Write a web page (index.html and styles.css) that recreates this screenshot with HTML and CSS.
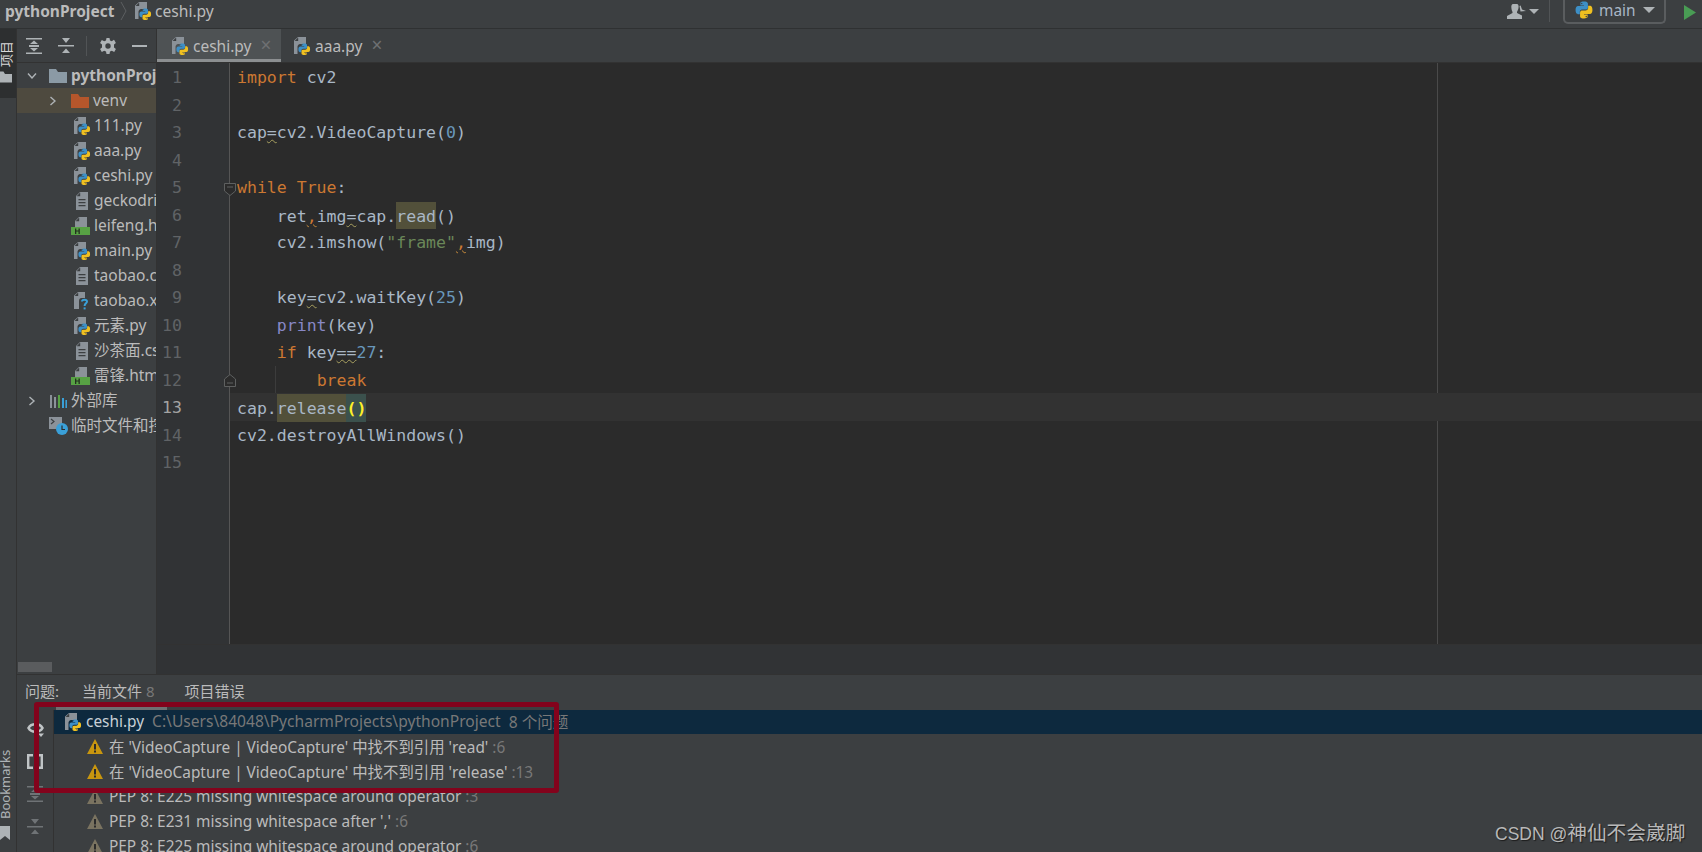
FILE: index.html
```html
<!DOCTYPE html>
<html lang="zh">
<head>
<meta charset="utf-8">
<title>pythonProject - ceshi.py</title>
<link rel="stylesheet" href="styles.css">
</head>
<body>
<svg class="defs" width="0" height="0">
  <defs>
    <symbol id="logo" viewBox="0 0 16 16">
      <path fill="#3d8fc6" d="M7.9 0.5C4.6 0.5 4.8 1.9 4.8 1.9V3.9H8V4.5H3.2S0.5 4.2 0.5 8.1C0.5 12 2.8 11.8 2.8 11.8H4.3V9.9S4.2 7.5 6.6 7.5H9.6S11.5 7.6 11.5 5.7V2.5S11.8 0.5 7.9 0.5ZM6 1.6A.6.6 0 1 1 6 2.8A.6.6 0 0 1 6 1.6Z"/>
      <path fill="#f0c020" d="M8.1 15.5C11.4 15.5 11.2 14.1 11.2 14.1V12.1H8V11.5H12.8S15.5 11.8 15.5 7.9C15.5 4 13.2 4.2 13.2 4.2H11.7V6.1S11.8 8.5 9.4 8.5H6.4S4.5 8.4 4.5 10.3V13.5S4.2 15.5 8.1 15.5ZM10 14.4A.6.6 0 1 1 10 13.2A.6.6 0 0 1 10 14.4Z"/>
    </symbol>
    <symbol id="page" viewBox="0 0 18 18">
      <path fill="#8b9299" d="M1 3.5L5 0H13V7H7.5C5 7 4.5 9 4.5 10V17H1Z"/>
      <path fill="#3c3f41" d="M5.2 0.6V4H1.6Z"/>
    </symbol>
    <symbol id="py" viewBox="0 0 18 18">
      <use href="#page" width="18" height="18"/>
      <use href="#logo" x="5" y="6" width="12.5" height="12.5"/>
    </symbol>
    <symbol id="txt" viewBox="0 0 18 18">
      <path fill="#8b9299" d="M3 4L7 0H15V18H3Z"/>
      <path fill="#3c3f41" d="M7.2 .6V4.2H3.6Z"/>
      <path fill="#3c3f41" d="M5.5 7H12.5V8.2H5.5ZM5.5 10H12.5V11.2H5.5ZM5.5 13H12.5V14.2H5.5Z"/>
    </symbol>
    <symbol id="html" viewBox="0 0 20 18">
      <path fill="#8b9299" d="M4 4L8 0H16V10H4Z"/>
      <path fill="#3c3f41" d="M8.2 .6V4.2H4.6Z"/>
      <rect y="10" width="19" height="8" fill="#57a244"/>
      <path fill="#23301f" d="M4 11.5H5.3V13.4H7.5V11.5H8.8V17H7.5V14.6H5.3V17H4Z"/>
    </symbol>
    <symbol id="unknown" viewBox="0 0 18 18">
      <path fill="#8b9299" d="M1 3.5L5 0H12V6H8.5C7 6 6 7 6 9V17H1Z"/>
      <path fill="#3c3f41" d="M5.2 .6V4H1.6Z"/>
      <path fill="none" stroke="#3aa0d8" stroke-width="2" d="M9 9.5C9 7 14 7 14 9.6C14 11.4 11.6 11.4 11.6 14"/>
      <rect x="10.6" y="15.4" width="2" height="2" fill="#3aa0d8"/>
    </symbol>
    <symbol id="folder" viewBox="0 0 18 14">
      <path d="M0 0H7L9 3H18V14H0Z"/>
    </symbol>
    <symbol id="warn" viewBox="0 0 16 15">
      <path d="M8 0L16 15H0Z"/>
      <rect x="7" y="5" width="2" height="5.5" fill="#2b2b2b"/>
      <rect x="7" y="11.5" width="2" height="2" fill="#2b2b2b"/>
    </symbol>
    <symbol id="expand" viewBox="0 0 16 16">
      <path fill="#aeb3b6" d="M0 0H16V1.6H0ZM0 14.4H16V16H0ZM3 7H13V9H3Z"/>
      <path fill="#aeb3b6" d="M8 2.5L12 6H4ZM8 13.5L12 10H4Z"/>
    </symbol>
    <symbol id="collapse" viewBox="0 0 16 16">
      <path fill="#aeb3b6" d="M0 7H16V8.6H0ZM4 0H12L8 5ZM8 10.5L12 15H4Z"/>
    </symbol>
  </defs>
</svg>

<div class="app">
  <header class="topbar">
    <strong class="crumb-root">pythonProject</strong>
    <svg class="crumb-sep" width="7" height="20" viewBox="0 0 7 20"><path d="M1 1L6 10L1 19" fill="none" stroke="#5c5f61"/></svg>
    <svg class="ico" width="18" height="18"><use href="#py"/></svg>
    <span class="crumb-file">ceshi.py</span>
    <div class="top-right">
      <svg class="user" width="19" height="15" viewBox="0 0 19 15"><path fill="#aeb3b6" d="M6 0H10C11 0 12 1.5 11.5 4C11.2 6 10.4 7 10 7.8V9L15 11.5V15H0V12L5.5 9V7.8C5 7 4.6 6 4.4 4C4 1.5 5 0 6 0Z"/><path fill="#aeb3b6" d="M12.5 2L13.6 1.5L15 5.5L19 7L13.5 7.5Z"/></svg>
      <i class="caret"></i>
      <span class="top-div"></span>
      <div class="runbox">
        <svg width="18" height="18"><use href="#logo"/></svg>
        <span class="run-name">main</span>
        <i class="caret wide"></i>
      </div>
      <svg class="play" width="12" height="15" viewBox="0 0 12 15"><path fill="#499c54" d="M0 0L12 7.5L0 15Z"/></svg>
    </div>
  </header>

  <div class="body">
    <aside class="strip">
      <div class="strip-active">
        <span class="strip-label">项目</span>
        <svg class="strip-folder" width="14" height="12"><use href="#folder"/></svg>
      </div>
      <div class="strip-bottom">
        <span class="strip-book">Bookmarks</span>
        <svg width="10" height="14" viewBox="0 0 10 14"><path fill="#aeb3b6" d="M0 0H10V14L5 10L0 14Z"/></svg>
      </div>
    </aside>

    <div class="work">
      <div class="upper">
        <section class="project">
          <div class="proj-tools">
            <svg width="16" height="16"><use href="#expand"/></svg>
            <svg width="16" height="16"><use href="#collapse"/></svg>
            <span class="tool-div"></span>
            <svg width="16" height="16" viewBox="0 0 16 16"><path fill="#aeb3b6" fill-rule="evenodd" d="M6.5 0H9.5L10 2.4L11.8 3.2L13.9 1.8L14.2 2.1L15.9 5L14 6.5V9.5L15.9 11L14.2 13.9L11.8 12.8L10 13.6L9.5 16H6.5L6 13.6L4.2 12.8L1.8 13.9L0.1 11L2 9.5V6.5L0.1 5L1.8 2.1L4.2 3.2L6 2.4ZM8 5.3A2.7 2.7 0 1 0 8 10.7A2.7 2.7 0 1 0 8 5.3Z"/></svg>
            <span class="minus"></span>
          </div>
          <div class="tree">
            <div class="node lv0 bold"><svg class="arrow" width="10" height="6" viewBox="0 0 10 6"><path d="M1 .5L5 5L9 .5" fill="none" stroke="#aeb3b6" stroke-width="1.4"/></svg><svg class="nico folder-gray" width="18" height="14"><use href="#folder"/></svg><span>pythonProject</span></div>
            <div class="node lv1 hl"><svg class="arrow" width="6" height="10" viewBox="0 0 6 10"><path d="M.5 1L5 5L.5 9" fill="none" stroke="#aeb3b6" stroke-width="1.4"/></svg><svg class="nico folder-orange" width="18" height="14"><use href="#folder"/></svg><span>venv</span></div>
            <div class="node lv2"><svg class="nico" width="18" height="18"><use href="#py"/></svg><span>111.py</span></div>
            <div class="node lv2"><svg class="nico" width="18" height="18"><use href="#py"/></svg><span>aaa.py</span></div>
            <div class="node lv2"><svg class="nico" width="18" height="18"><use href="#py"/></svg><span>ceshi.py</span></div>
            <div class="node lv2"><svg class="nico" width="18" height="18"><use href="#txt"/></svg><span>geckodriver.log</span></div>
            <div class="node lv2"><svg class="nico wide" width="20" height="18"><use href="#html"/></svg><span>leifeng.html</span></div>
            <div class="node lv2"><svg class="nico" width="18" height="18"><use href="#py"/></svg><span>main.py</span></div>
            <div class="node lv2"><svg class="nico" width="18" height="18"><use href="#txt"/></svg><span>taobao.csv</span></div>
            <div class="node lv2"><svg class="nico" width="18" height="18"><use href="#unknown"/></svg><span>taobao.xlsx</span></div>
            <div class="node lv2"><svg class="nico" width="18" height="18"><use href="#py"/></svg><span>元素.py</span></div>
            <div class="node lv2"><svg class="nico" width="18" height="18"><use href="#txt"/></svg><span>沙茶面.csv</span></div>
            <div class="node lv2"><svg class="nico wide" width="20" height="18"><use href="#html"/></svg><span>雷锋.html</span></div>
            <div class="node lv0"><svg class="arrow" width="6" height="10" viewBox="0 0 6 10"><path d="M.5 1L5 5L.5 9" fill="none" stroke="#aeb3b6" stroke-width="1.4"/></svg><svg class="nico" width="18" height="14" viewBox="0 0 18 14"><path d="M1 1H3V14H1ZM5 3H7V14H5Z" fill="#8b9299"/><path d="M9 1H11V14H9Z" fill="#57a244"/><path d="M13 4H15V14H13ZM16.4 6H18V14H16.4Z" fill="#3aa0d8"/></svg><span>外部库</span></div>
            <div class="node lv0b"><svg class="nico" width="19" height="18" viewBox="0 0 19 18"><path fill="#8b9299" d="M0 0H13V7C10 7 8 9 7.6 12H0Z"/><path d="M2 2L5 4.5L2 7" fill="none" stroke="#3c3f41" stroke-width="1.2"/><circle cx="13" cy="12" r="6" fill="#3aa0d8"/><path d="M13 8.5V12.5H16" fill="none" stroke="#2b2b2b" stroke-width="1.2"/></svg><span>临时文件和控制台</span></div>
          </div>
          <div class="proj-scroll"><span class="thumb"></span></div>
        </section>

        <section class="editor-area">
          <nav class="tabs">
            <div class="tab active"><svg width="18" height="18"><use href="#py"/></svg><span>ceshi.py</span><i class="close">×</i></div>
            <div class="tab"><svg width="18" height="18"><use href="#py"/></svg><span>aaa.py</span><i class="close">×</i></div>
          </nav>
          <div class="editor">
            <div class="gutter">
              <div>1</div><div>2</div><div>3</div><div>4</div><div>5</div><div>6</div><div>7</div><div>8</div><div>9</div><div>10</div><div>11</div><div>12</div><div class="cur">13</div><div>14</div><div>15</div>
              <svg class="fold f1" width="12" height="13" viewBox="0 0 12 13"><path d="M.5.5H11.5V8L6 12.5L.5 8ZM3 4H9" fill="#2b2b2b" stroke="#5e6060"/></svg>
              <svg class="fold f2" width="12" height="13" viewBox="0 0 12 13"><path d="M.5 12.5H11.5V5L6 .5L.5 5ZM3 9H9" fill="#2b2b2b" stroke="#5e6060"/></svg>
            </div>
            <div class="code">
              <div class="ln"><b>import</b> cv2</div>
              <div class="ln"></div>
              <div class="ln">cap<u>=</u>cv2.VideoCapture(<em>0</em>)</div>
              <div class="ln"></div>
              <div class="ln"><b>while</b> <b>True</b>:</div>
              <div class="ln">    ret<u class="comma">,</u>img<u>=</u>cap.<mark>read</mark>()</div>
              <div class="ln">    cv2.imshow(<s>"frame"</s><u class="comma">,</u>img)</div>
              <div class="ln"></div>
              <div class="ln">    key<u>=</u>cv2.waitKey(<em>25</em>)</div>
              <div class="ln">    <i class="builtin">print</i>(key)</div>
              <div class="ln">    <b>if</b> key<u>==</u><em>27</em>:</div>
              <div class="ln guide">        <b>break</b></div>
              <div class="ln curline">cap.<mark>release</mark><span class="pair">()</span></div>
              <div class="ln">cv2.destroyAllWindows()</div>
              <div class="ln"></div>
            </div>
          </div>
          <div class="crumbs-band"></div>
        </section>
      </div>

      <section class="problems">
        <div class="pr-head">
          <span class="pr-title">问题:</span>
          <span class="pr-tab cur">当前文件 <small>8</small></span>
          <span class="pr-tab">项目错误</span>
        </div>
        <div class="pr-body">
          <div class="pr-tools">
            <svg width="17" height="15" viewBox="0 0 17 15"><path fill="none" stroke="#c0c4c6" stroke-width="2.6" d="M1.5 6C4 1 13 1 15.5 6C13 11 4 11 1.5 6Z"/><path fill="#c0c4c6" d="M11 11.5H17L14 15Z"/></svg>
            <svg width="16" height="15" viewBox="0 0 16 15"><path fill="none" stroke="#c0c4c6" stroke-width="2.4" d="M6 1.2H1.2V13.8H6M10 1.2H14.8V13.8H10"/></svg>
            <svg class="dim" width="16" height="16"><use href="#expand"/></svg>
            <svg class="dim" width="16" height="16"><use href="#collapse"/></svg>
            <svg class="dim" width="16" height="16"><use href="#collapse"/></svg>
          </div>
          <div class="pr-list">
            <div class="row sel"><svg width="18" height="18"><use href="#py"/></svg><span class="fname">ceshi.py</span><span class="path">C:\Users\84048\PycharmProjects\pythonProject</span><span class="path">8 个问题</span></div>
            <div class="row item"><svg class="warn-on" width="16" height="15"><use href="#warn"/></svg><span>在 'VideoCapture | VideoCapture' 中找不到引用 'read' <small>:6</small></span></div>
            <div class="row item"><svg class="warn-on" width="16" height="15"><use href="#warn"/></svg><span>在 'VideoCapture | VideoCapture' 中找不到引用 'release' <small>:13</small></span></div>
            <div class="row item"><svg class="warn-off" width="16" height="15"><use href="#warn"/></svg><span>PEP 8: E225 missing whitespace around operator <small>:3</small></span></div>
            <div class="row item"><svg class="warn-off" width="16" height="15"><use href="#warn"/></svg><span>PEP 8: E231 missing whitespace after ',' <small>:6</small></span></div>
            <div class="row item"><svg class="warn-off" width="16" height="15"><use href="#warn"/></svg><span>PEP 8: E225 missing whitespace around operator <small>:6</small></span></div>
          </div>
        </div>
      </section>
    </div>
  </div>
  <div class="redbox"></div>
  <div class="watermark">CSDN @<span>神仙不会崴脚</span></div>
</div>
</body>
</html>
```

FILE: styles.css
```css
* { box-sizing: border-box; }
html, body { margin: 0; height: 100%; overflow: hidden; background: #3c3f41; }
body { font-family: "Noto Sans", "Noto Sans CJK SC", sans-serif; font-size: 15px; color: #bbbbbb; }
svg { display: block; flex: none; }
.defs { position: absolute; }
.app { position: relative; width: 1702px; height: 852px; display: flex; flex-direction: column; overflow: hidden; }

/* top bar */
.topbar { height: 29px; flex: none; display: flex; align-items: center; padding: 0 6px 6px 5px; border-bottom: 1px solid #2f3132; background: #3c3f41; }
.crumb-root { font-size: 15.5px; font-weight: 700; color: #bbbbbb; width: 115px; white-space: nowrap; }
.crumb-sep { margin-right: 7px; }
.crumb-file { margin-left: 3px; font-size: 15.6px; }
.top-right { margin-left: auto; display: flex; align-items: center; }
.user { margin-right: 3px; }
.caret { display: block; width: 0; height: 0; border-left: 5px solid transparent; border-right: 5px solid transparent; border-top: 5px solid #aeb3b6; }
.caret.wide { border-left-width: 6px; border-right-width: 6px; border-top-width: 6px; }
.top-div { width: 1px; height: 22px; background: #515456; margin: 0 13px 0 10px; }
.runbox { width: 103px; height: 29px; margin-top: -3px; padding: 3px 0 0 10px; display: flex; align-items: center; border: 2px solid #5a5d5f; border-top: 0; border-radius: 0 0 5px 5px; }
.run-name { margin: 0 8px 0 6px; font-size: 15.4px; color: #a9b7c6; width: 36px; }
.play { margin: 2px 0 0 18px; }

/* layout */
.body { flex: 1; min-height: 0; display: flex; }
.strip { width: 17px; flex: none; display: flex; flex-direction: column; justify-content: space-between; border-right: 1px solid #323232; overflow: hidden; }
.strip-active { height: 69px; background: #2d2f30; padding-top: 11px; overflow: hidden; }
.strip-label { display: block; writing-mode: vertical-rl; text-orientation: sideways; transform: rotate(180deg); font-size: 13px; line-height: 13px; color: #d8d8d8; height: 27px; width: 12px; }
.strip-folder { fill: #aeb3b6; margin: 4px 0 0 -2px; }
.strip-bottom { height: 103px; padding-bottom: 14px; color: #aeb3b6; }
.strip-book { display: block; height: 70px; writing-mode: vertical-rl; transform: rotate(180deg); font-size: 13px; line-height: 11px; margin-bottom: 7px; }
.work { flex: 1; min-width: 0; display: flex; flex-direction: column; }
.upper { height: 646px; flex: none; display: flex; border-bottom: 1px solid #323232; }

/* project */
.project { width: 140px; flex: none; display: flex; flex-direction: column; border-right: 1px solid #323232; }
.proj-tools { height: 34px; flex: none; display: flex; align-items: center; padding-left: 9px; border-bottom: 1px solid #323232; gap: 16px; }
.tool-div { width: 1px; height: 20px; background: #515456; margin: 0 -3px 0 -4px; }
.minus { width: 15px; height: 2px; background: #aeb3b6; }
.tree { flex: 1; min-height: 0; overflow: hidden; }
.node { height: 25px; display: flex; align-items: center; white-space: nowrap; font-size: 15.5px; overflow: hidden; }
.node span { margin-top: -2px; }
.node.hl { background: #4e4a3f; }
.node.bold { font-weight: 700; }
.lv0 { padding-left: 10px; }
.lv0 .arrow { width: 10px; margin-right: 12px; }
.lv0b { padding-left: 32px; }
.lv1 { padding-left: 33px; }
.lv1 .arrow { margin-right: 15px; }
.lv2 { padding-left: 56px; }
.nico { margin-right: 3px; }
.lv0 .nico, .lv1 .nico { margin-right: 4px; }
.lv0b .nico { margin-right: 3px; }
.lv2 .wide { margin-left: -2px; }
.folder-gray { fill: #8b9aa5; }
.folder-orange { fill: #b5562b; }
.proj-scroll { height: 12px; flex: none; }
.thumb { display: block; width: 34px; height: 10px; margin-left: 1px; background: #5a5c5e; }

/* tabs + editor */
.editor-area { flex: 1; min-width: 0; display: flex; flex-direction: column; }
.tabs { height: 34px; flex: none; display: flex; background: #3c3f41; border-bottom: 1px solid #323232; }
.tab { display: flex; align-items: center; height: 33px; padding: 0 0 0 14px; gap: 4px; font-size: 15.5px; }
.tab.active { width: 124px; background: #4e5254; border-bottom: 3px solid #8c8f91; padding-top: 3px; }
.tab + .tab { padding-left: 12px; }
.close { font-style: normal; font-size: 19px; line-height: 1; color: #6e7072; margin-left: 5px; }
.editor { height: 582px; flex: none; display: flex; overflow: hidden; background: #2b2b2b; border-bottom: 1px solid #323232; font-family: "DejaVu Sans Mono", monospace; font-size: 16.55px; }
.gutter { position: relative; width: 73px; flex: none; padding-right: 47px; background: #313335; border-right: 1px solid #555555; color: #606366; text-align: right; }
.gutter div { height: 27.5px; line-height: 27.5px; padding-top: 1px; }
.gutter .cur { color: #a4a3a3; }
.fold { position: absolute; right: -7px; }
.f1 { top: 120px; }
.f2 { top: 311px; }
.code { flex: 1; min-width: 0; color: #a9b7c6; background-image: linear-gradient(#4a4a4a, #4a4a4a); background-size: 1px 100%; background-position: 1207px 0; background-repeat: no-repeat; }
.ln { height: 27.5px; line-height: 27.5px; padding: 1px 0 0 7px; white-space: pre; }
.ln.curline { background: #323232; }
.ln.guide { background: linear-gradient(#3c3c3c, #3c3c3c) 45px 0 / 1px 100% no-repeat; }
.ln b { font-weight: 400; color: #cc7832; }
.ln em { font-style: normal; color: #6897bb; }
.ln s { text-decoration: none; color: #6a8759; }
.ln u { text-decoration: underline wavy #a8a060 1px; text-underline-offset: 1px; }
.ln u.comma { color: #cc7832; text-decoration-color: #c88a3a; }
.ln mark { display: inline-block; height: 27.5px; padding-top: 1px; background: #52503a; color: inherit; }
.builtin { font-style: normal; color: #8888c6; }
.pair { display: inline-block; height: 27.5px; padding-top: 1px; background: #3b514d; color: #ffef28; font-weight: 700; }
.crumbs-band { flex: 1; background: #313335; }

/* problems */
.problems { flex: 1; min-height: 0; display: flex; flex-direction: column; }
.pr-head { height: 35px; flex: none; display: flex; align-items: center; padding: 0 0 4px 8px; font-size: 15px; }
.pr-title { margin-right: 23px; }
.pr-tab { margin-right: 30px; position: relative; }
.pr-tab small { font-size: 15px; color: #787878; }
.pr-tab.cur::after { content: ""; position: absolute; left: -26px; right: -12px; bottom: -9px; height: 3px; background: #6e7072; }
.pr-body { flex: 1; min-height: 0; display: flex; }
.pr-tools { width: 37px; flex: none; padding: 12px 0 0 10px; display: flex; flex-direction: column; gap: 17px; border-right: 1px solid #323232; }
.pr-tools .dim { opacity: .45; }
.pr-list { flex: 1; min-width: 0; }
.row { height: 25px; display: flex; align-items: center; white-space: nowrap; font-size: 15.4px; }
.row span { margin-top: -2px; }
.row.item span { margin-top: -1px; }
.row.sel { height: 24px; background: #0d293e; padding-left: 10px; color: #c8d0d6; }
.fname { margin: 0 8px 0 4px; }
.path { color: #787878; font-size: 15.6px; margin-right: 8px; }
.row.item { padding-left: 33px; gap: 6px; }
.row small { font-size: 15.4px; color: #787878; }
.warn-on { fill: #c8960f; }
.warn-off { fill: #7a7360; }

/* overlays */
.redbox { position: absolute; left: 34px; top: 702px; width: 525px; height: 91px; border: 5px solid #83031c; border-radius: 3px; pointer-events: none; }
.watermark { position: absolute; left: 1495px; top: 820px; font-family: "Liberation Sans", "Noto Sans CJK SC", sans-serif; font-size: 17.5px; line-height: 26px; color: #b8b8b8; text-shadow: 1px 1px 1px #1c1c1c; white-space: nowrap; }
.watermark span { font-size: 19.7px; }
```
